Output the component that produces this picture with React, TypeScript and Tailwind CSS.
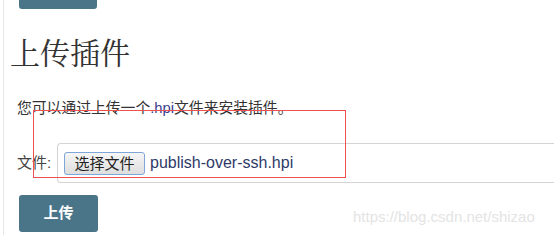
import React from "react";

const sans = "font-['Liberation_Sans','Noto_Sans_CJK_SC',sans-serif]";

export default function App() {
  return (
    <div className={`relative w-[554px] h-[235px] overflow-hidden bg-white text-[#333] ${sans}`}>
      <div className="ml-[3px] h-full border-l border-[#e8e8e8]">
        <div className="ml-[15px] w-[78px] h-[9px] rounded-b-[3px] bg-[#4a7589]" />

        <h1 className="ml-[6px] mt-[24px] text-[30px] leading-[36px] text-[#333] font-['Noto_Serif_CJK_SC','Noto_Sans_CJK_SC',serif] font-normal">
          上传插件
        </h1>

        <p className="ml-[13px] mt-[29px] text-[14.8px] leading-[20px] text-[#333]">
          您可以通过上传一个<span className="text-[#3a3f8f]">.hpi</span>文件来安装插件。
        </p>

        <div className="mt-[25px] flex items-center">
          <span className="ml-[13px] w-[40px] text-[15px] text-[#444]">文件:</span>
          <div className="flex h-[40px] flex-1 items-center rounded-l-[4px] border border-r-0 border-[#d4d4d4] pl-[6px]">
            <button className="h-[23px] w-[81px] rounded-[3px] border border-[#7ea6d8] bg-gradient-to-b from-[#f6f6f6] to-[#dedede] text-[15px] leading-[21px] text-[#222]">
              选择文件
            </button>
            <span className="ml-[5px] text-[16px] text-[#2f3a6a]">publish-over-ssh.hpi</span>
          </div>
        </div>

        <button className="ml-[15px] mt-[12px] flex h-[37px] w-[79px] items-center justify-center rounded-[3px] bg-[#4a7589] text-[15px] font-bold text-white">
          上传
        </button>
      </div>

      <div className="absolute left-[33px] top-[110px] h-[68px] w-[313px] border-[1.5px] border-[#ec5252]" />

      <div className="absolute left-[353px] top-[207px] text-[15px] leading-[20px] text-[#e4e4e4]">
        https://blog.csdn.net/shizao
      </div>
    </div>
  );
}
